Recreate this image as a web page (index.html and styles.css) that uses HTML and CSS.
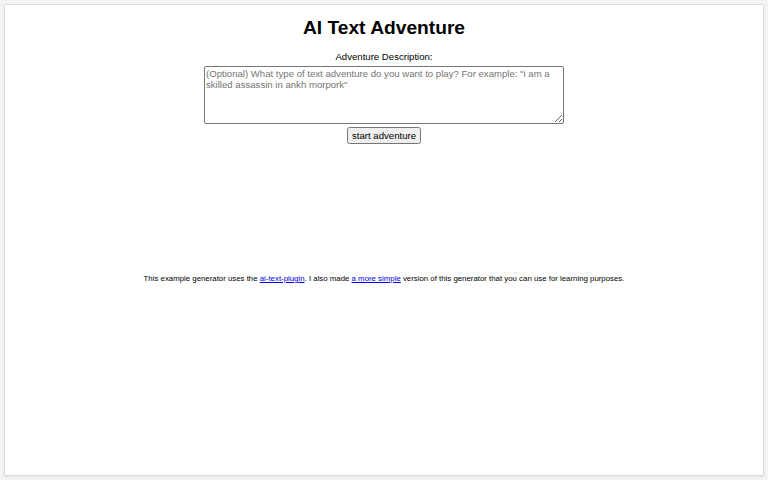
FILE: index.html
```html
<!DOCTYPE html>
<html>
  <head>
    <title>AI Text Adventure</title>
    <link rel="stylesheet" href="styles.css">
  </head>
  <body>
    <div class="page">
      <h1 class="title">AI Text Adventure</h1>
      <div class="setup">
        <label class="label" for="description">Adventure Description:</label>
        <textarea id="description" class="description" placeholder="(Optional) What type of text adventure do you want to play? For example: &quot;i am a skilled assassin in ankh morpork&quot;"></textarea>
        <button class="start" onclick="startAdventure()">start adventure</button>
      </div>
      <div id="story" class="story"></div>
      <p class="note">This example generator uses the <a href="#">ai-text-plugin</a>. I also made <a href="#">a more simple</a> version of this generator that you can use for learning purposes.</p>
    </div>
    <script>
      // Kick off the story with whatever the player typed
      function startAdventure() {
        const text = document.getElementById('description').value;
        document.getElementById('story').textContent = text;
      }
    </script>
  </body>
</html>
```

FILE: styles.css
```css
body {
  margin: 0;
  padding: 4px;
  background-color: #f4f4f4;
  font-family: "Liberation Sans", Arial, sans-serif;
}
.page {
  box-sizing: border-box;
  height: 472px;
  background-color: #fff;
  border: 1px solid #dcdcdc;
  border-radius: 2px;
  box-shadow: 0 1px 2px rgba(0, 0, 0, 0.08);
  text-align: center;
  overflow: hidden;
}
.title {
  font-size: 19.2px;
  margin: 12px 0 0;
}
.setup {
  display: flex;
  flex-direction: column;
  align-items: center;
  margin-top: 12px;
}
.label {
  font-size: 9.6px;
  margin-bottom: 4px;
}
.description {
  box-sizing: border-box;
  width: 360px;
  height: 58px;
  padding: 1px 1px;
  font-family: "Liberation Sans", Arial, sans-serif;
  font-size: 9.6px;
  border: 1px solid #767676;
  border-radius: 2px;
}
.description::placeholder {
  color: #757575;
}
.start {
  margin-top: 3px;
  font-family: "Liberation Sans", Arial, sans-serif;
  font-size: 9.6px;
  padding: 1px 3px;
}
.story {
  height: 130px;
}
.note {
  font-size: 7.84px;
  margin: 0;
}
.note a {
  color: #0000ee;
}
```
